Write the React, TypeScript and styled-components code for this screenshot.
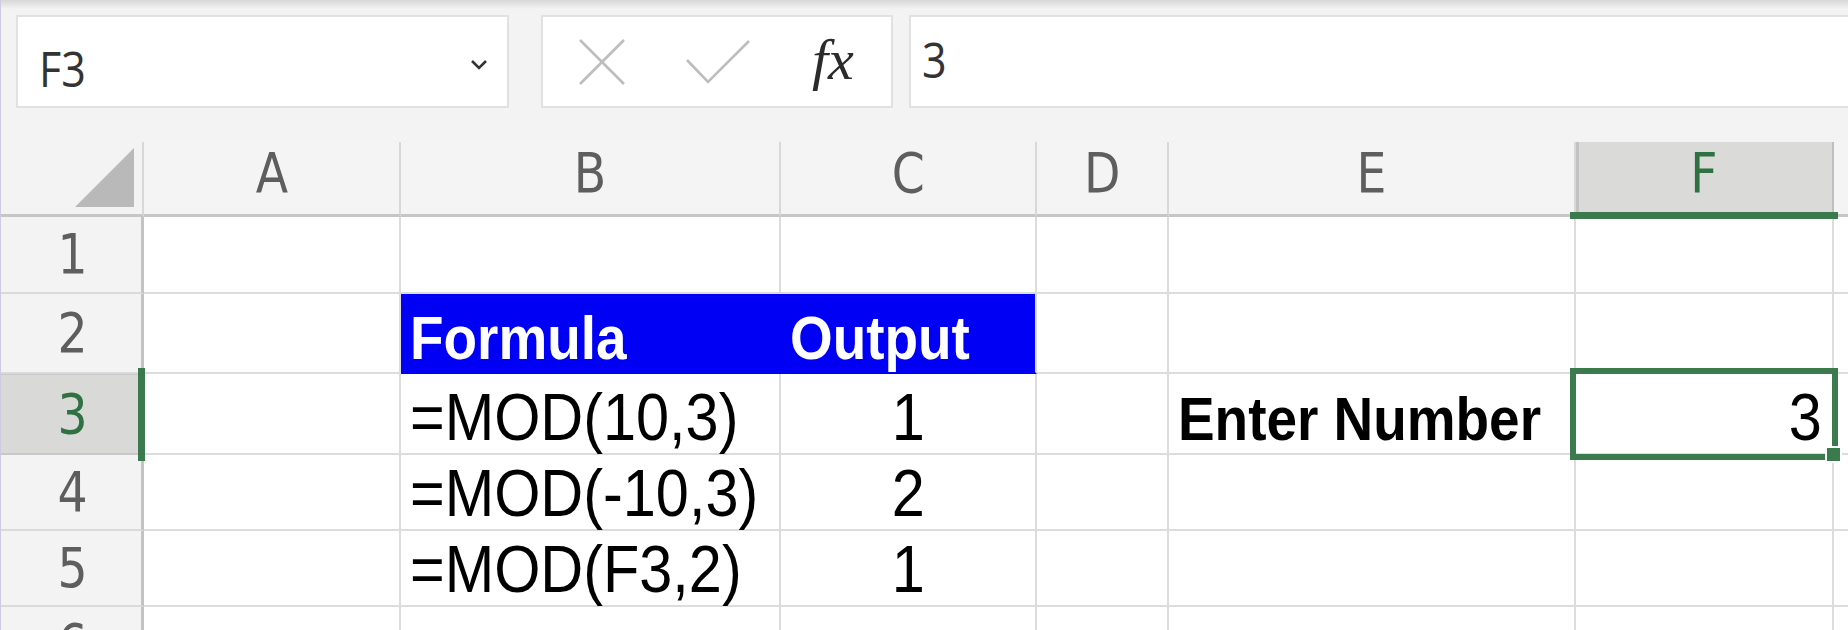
import React from "react";
import styled, { createGlobalStyle } from "styled-components";

const GREEN = "#3b7a4d";
const GRID = "#dcdcdc";
const BLUE = "#0000f5";
const HEAD_TEXT = "#5e5e5e";

const GlobalStyle = createGlobalStyle`
  html, body {
    margin: 0;
    padding: 0;
    background: #f3f3f3;
  }
  * {
    box-sizing: border-box;
  }
`;

type Align = "left" | "center" | "right";

interface CellData {
  text: string;
  align?: Align;
  bold?: boolean;
  fill?: string;
  joinRight?: boolean;
}

// column widths include their right gridline
const COLUMNS = [
  { key: "A", width: 257 },
  { key: "B", width: 380 },
  { key: "C", width: 256 },
  { key: "D", width: 132 },
  { key: "E", width: 407 },
  { key: "F", width: 258 },
  { key: "G", width: 0 },
];

const ROW_HEIGHTS = [77, 80, 81, 76, 76, 77];

const SELECTED_COL = "F";
const SELECTED_ROW = 3;

const CELLS: Record<string, CellData> = {
  B2: { text: "Formula", bold: true, fill: BLUE, joinRight: true },
  C2: { text: "Output", bold: true, fill: BLUE },
  B3: { text: "=MOD(10,3)" },
  C3: { text: "1", align: "center" },
  E3: { text: "Enter Number", bold: true },
  F3: { text: "3", align: "right" },
  B4: { text: "=MOD(-10,3)" },
  C4: { text: "2", align: "center" },
  B5: { text: "=MOD(F3,2)" },
  C5: { text: "1", align: "center" },
};

const App = () => {
  return (
    <>
      <GlobalStyle />
      <Page>
        <Toolbar>
          <NameBox>
            <UiText>F3</UiText>
            <svg width="18" height="11" viewBox="0 0 18 11">
              <polyline
                points="2,2 9,9 16,2"
                fill="none"
                stroke="#333"
                strokeWidth="2.6"
              />
            </svg>
          </NameBox>
          <FxBox>
            <svg width="48" height="48" viewBox="0 0 48 48">
              <path
                d="M2 2 L46 46 M46 2 L2 46"
                stroke="#bdbdbd"
                strokeWidth="2.6"
                fill="none"
              />
            </svg>
            <svg width="64" height="45" viewBox="0 0 64 45">
              <polyline
                points="1,21 22,43 63,2"
                stroke="#bdbdbd"
                strokeWidth="2.6"
                fill="none"
              />
            </svg>
            <FxLabel>fx</FxLabel>
          </FxBox>
          <FormulaBox>
            <UiText>3</UiText>
          </FormulaBox>
        </Toolbar>

        <Sheet>
          <Corner>
            <SelectAll />
          </Corner>
          {COLUMNS.map((col) => (
            <ColHead key={col.key} $selected={col.key === SELECTED_COL}>
              <HeadText>{col.key === "G" ? "" : col.key}</HeadText>
            </ColHead>
          ))}

          {ROW_HEIGHTS.map((_, i) => {
            const row = i + 1;
            return (
              <React.Fragment key={row}>
                <RowHead $selected={row === SELECTED_ROW}>
                  <HeadText>{row}</HeadText>
                </RowHead>
                {COLUMNS.map((col) => {
                  const ref = `${col.key}${row}`;
                  const data = CELLS[ref];
                  const active = col.key === SELECTED_COL && row === SELECTED_ROW;
                  const align = data?.align ?? "left";
                  return (
                    <Cell
                      key={ref}
                      $fill={data?.fill}
                      $joinRight={data?.joinRight}
                      $align={align}
                      $active={active}
                    >
                      {data && (
                        <CellText
                          $bold={data.bold}
                          $align={align}
                          $light={!!data.fill}
                        >
                          {data.text}
                        </CellText>
                      )}
                      {active && (
                        <>
                          <Selection />
                          <FillHandle />
                        </>
                      )}
                    </Cell>
                  );
                })}
              </React.Fragment>
            );
          })}
        </Sheet>
      </Page>
    </>
  );
};

export default App;

const Page = styled.div`
  width: 1848px;
  height: 630px;
  overflow: hidden;
  background: #f3f3f3;
  border-left: 1px solid #cccbe2;
  display: flex;
  flex-direction: column;
`;

const Toolbar = styled.div`
  flex: none;
  height: 142px;
  display: flex;
  align-items: flex-start;
  padding: 15px 0 0 15px;
  background: linear-gradient(#d7d7d7, #f3f3f3 9px);
`;

const NameBox = styled.div`
  width: 493px;
  height: 93px;
  display: flex;
  align-items: center;
  justify-content: space-between;
  padding: 12px 19px 0 21px;
  background: #fff;
  border: 2px solid #e1e1e1;

  svg {
    margin-top: -6px;
  }
`;

const FxBox = styled.div`
  width: 352px;
  height: 93px;
  margin-left: 32px;
  display: flex;
  align-items: center;
  gap: 60px;
  padding-left: 35px;
  background: #fff;
  border: 2px solid #e1e1e1;
`;

const FxLabel = styled.span`
  font-family: "Liberation Serif", "Times New Roman", serif;
  font-style: italic;
  font-size: 58px;
  line-height: 1;
  color: #2b2b2b;
  margin-left: 2px;
  margin-top: -4px;
`;

const FormulaBox = styled.div`
  flex: 1;
  height: 93px;
  margin-left: 16px;
  margin-right: -4px;
  display: flex;
  align-items: center;
  padding: 0 0 6px 11px;
  background: #fff;
  border: 2px solid #e1e1e1;
`;

const UiText = styled.span`
  display: inline-block;
  font-family: "Open Sans", "Noto Sans", sans-serif;
  font-size: 50px;
  line-height: 1;
  color: #333;
  transform: scaleX(0.86);
  transform-origin: left center;
`;

const Sheet = styled.div`
  flex: none;
  display: grid;
  grid-template-columns: 143px ${COLUMNS.slice(0, -1)
      .map((c) => `${c.width}px`)
      .join(" ")} 1fr;
  grid-template-rows: 75px ${ROW_HEIGHTS.map((h) => `${h}px`).join(" ")};
`;

const Corner = styled.div`
  display: flex;
  align-items: flex-end;
  justify-content: flex-end;
  padding: 0 8px 7px 0;
  background: #f3f3f3;
  border-right: 2px solid #d8d8d8;
  border-bottom: 3px solid #c6c6c6;
`;

const SelectAll = styled.div`
  width: 59px;
  height: 59px;
  background: #b9b9b9;
  clip-path: polygon(100% 0, 100% 100%, 0 100%);
`;

const HeadText = styled.span`
  display: inline-block;
  font-family: "DejaVu Sans", "Liberation Sans", sans-serif;
  font-size: 55px;
  line-height: 1;
  transform: scaleX(0.86);
`;

const ColHead = styled.div<{ $selected?: boolean }>`
  position: relative;
  display: flex;
  align-items: center;
  justify-content: center;
  padding-bottom: 10px;
  background: ${(p) => (p.$selected ? "#dadad8" : "#f4f4f4")};
  color: ${(p) => (p.$selected ? "#2f7142" : HEAD_TEXT)};
  border-right: 2px solid ${(p) => (p.$selected ? "#bfbfbf" : "#d8d8d8")};
  border-bottom: 3px solid #c6c6c6;
  box-shadow: ${(p) => (p.$selected ? "inset 3px 0 #c2c2c2" : "none")};

  &::after {
    content: "";
    display: ${(p) => (p.$selected ? "block" : "none")};
    position: absolute;
    left: -6px;
    right: -6px;
    bottom: -5px;
    height: 7px;
    background: ${GREEN};
    z-index: 2;
  }
`;

const RowHead = styled.div<{ $selected?: boolean }>`
  position: relative;
  display: flex;
  align-items: center;
  justify-content: center;
  padding-left: 2px;
  background: ${(p) => (p.$selected ? "#d9d9d7" : "#f3f3f3")};
  color: ${(p) => (p.$selected ? "#2f7142" : HEAD_TEXT)};
  border-right: 3px solid #c3c3c3;
  border-bottom: 2px solid ${(p) => (p.$selected ? "#c8c8c8" : "#dadada")};
  border-top: ${(p) => (p.$selected ? "1px solid #c8c8c8" : "none")};

  &::after {
    content: "";
    display: ${(p) => (p.$selected ? "block" : "none")};
    position: absolute;
    top: -7px;
    bottom: -8px;
    right: -4px;
    width: 7px;
    background: ${GREEN};
    z-index: 2;
  }
`;

const justify = { left: "flex-start", center: "center", right: "flex-end" };

const Cell = styled.div<{
  $fill?: string;
  $joinRight?: boolean;
  $align: Align;
  $active?: boolean;
}>`
  position: ${(p) => (p.$active ? "relative" : "static")};
  display: flex;
  align-items: flex-end;
  justify-content: ${(p) => justify[p.$align]};
  padding: 0 10px 3px 10px;
  overflow: visible;
  white-space: nowrap;
  background: ${(p) => p.$fill ?? "#fff"};
  border-right: 2px solid ${(p) => (p.$fill && p.$joinRight ? p.$fill : GRID)};
  border-bottom: 2px solid ${(p) => p.$fill ?? GRID};
`;

const CellText = styled.span<{ $bold?: boolean; $align: Align; $light?: boolean }>`
  display: inline-block;
  font-family: "Liberation Sans", Arial, sans-serif;
  font-size: ${(p) => (p.$bold ? 61 : 66)}px;
  font-weight: ${(p) => (p.$bold ? 700 : 400)};
  line-height: 1;
  color: ${(p) => (p.$light ? "#fff" : "#000")};
  transform: scaleX(0.9);
  transform-origin: ${(p) => p.$align} bottom;
  margin-left: ${(p) => (p.$align === "left" ? "-1px" : "0")};
`;

const Selection = styled.div`
  position: absolute;
  top: -6px;
  left: -6px;
  right: -6px;
  bottom: -7px;
  border: 6px solid ${GREEN};
  z-index: 3;
  pointer-events: none;
`;

const FillHandle = styled.div`
  position: absolute;
  right: -10px;
  bottom: -10px;
  width: 17px;
  height: 17px;
  background: ${GREEN};
  border: 2px solid #fff;
  z-index: 4;
`;
